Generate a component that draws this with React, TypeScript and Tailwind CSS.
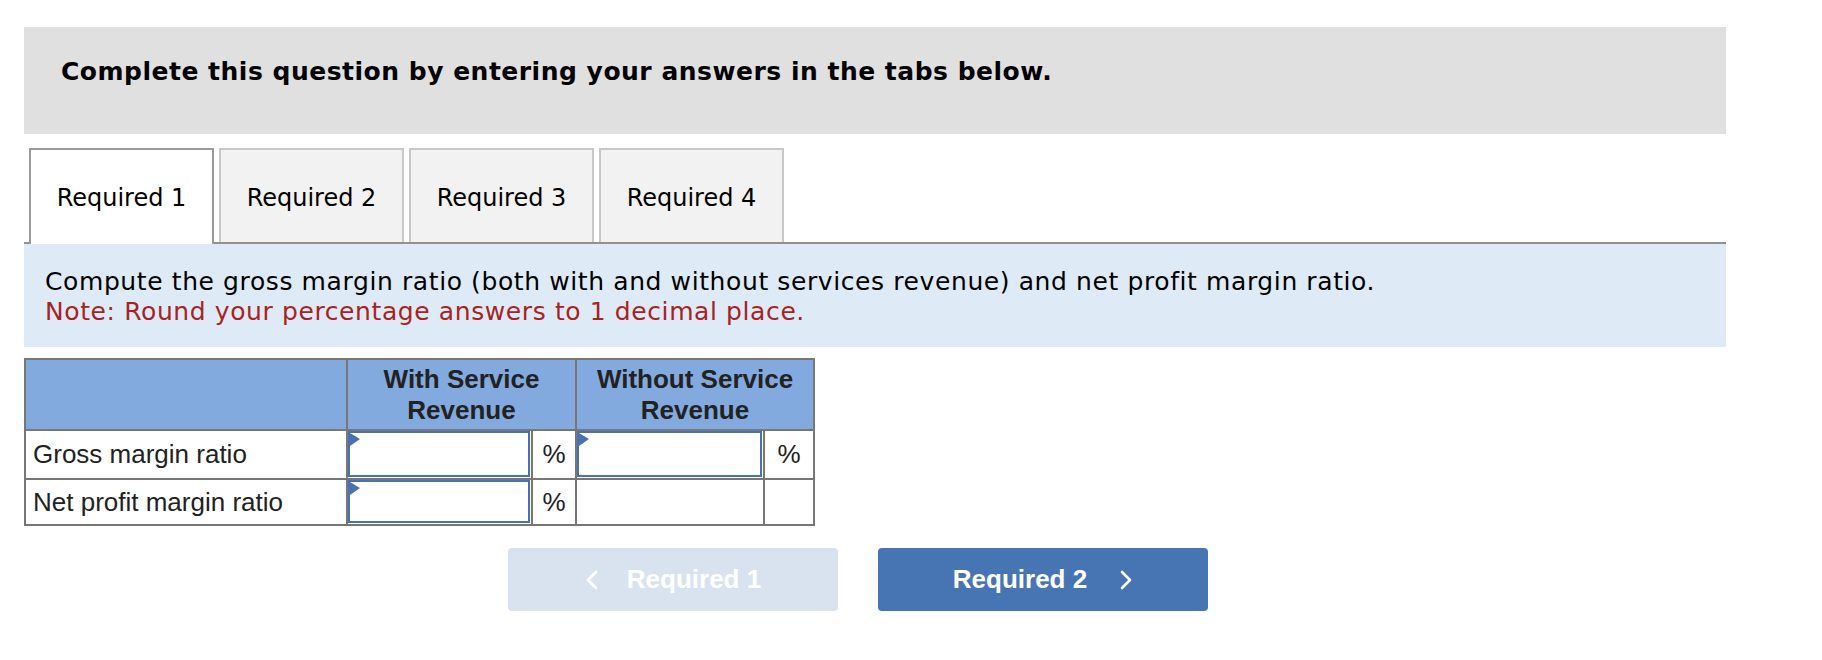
import React from "react";

const verdana = "font-['DejaVu_Sans',Verdana,sans-serif]";
const arial = "font-['Liberation_Sans',Arial,sans-serif]";

function Flag() {
  return (
    <svg className="absolute left-0 top-0" width="10" height="13" viewBox="0 0 10 13">
      <polygon points="0,0 10,6 0,13" fill="#4a72b0" />
    </svg>
  );
}

function InputBox() {
  return (
    <div className="relative h-full w-full border-2 border-[#4a72b0] bg-white">
      <Flag />
    </div>
  );
}

function Chevron({ dir }: { dir: "left" | "right" }) {
  return (
    <svg width="14" height="20" viewBox="0 0 14 20" className="shrink-0">
      <polyline
        points={dir === "left" ? "11,2 3,10 11,18" : "3,2 11,10 3,18"}
        fill="none"
        stroke="#ffffff"
        strokeWidth="2.6"
        strokeLinecap="round"
        strokeLinejoin="round"
      />
    </svg>
  );
}

export default function App() {
  const tabs = ["Required 1", "Required 2", "Required 3", "Required 4"];
  return (
    <div className="w-[1822px] h-[660px] bg-white overflow-hidden">
      <div className="ml-[24px] w-[1702px] pt-[27px]">
        {/* Header */}
        <div className={`h-[107px] bg-[#e0e0e0] pl-[37px] pt-[31px] ${verdana} text-[25px] font-bold leading-[28px] tracking-[0.5px] text-black`}>
          Complete this question by entering your answers in the tabs below.
        </div>

        {/* Tabs */}
        <div className="mt-[14px] flex h-[96px] gap-[5px] border-b-2 border-[#919191] pl-[5px]">
          {tabs.map((t, i) =>
            i === 0 ? (
              <div
                key={t}
                className={`-mb-[2px] flex h-[96px] w-[185px] items-center justify-center border-2 border-b-0 border-[#9a9a9a] bg-white pt-[2px] ${verdana} text-[24px] text-black`}
              >
                {t}
              </div>
            ) : (
              <div
                key={t}
                className={`flex h-[94px] w-[185px] items-center justify-center border-2 border-b-0 border-[#c8c8c8] bg-[#f2f2f2] pt-[4px] ${verdana} text-[24px] text-black`}
              >
                {t}
              </div>
            )
          )}
        </div>

        {/* Instructions */}
        <div className={`bg-[#deebf7] px-[21px] pt-[23px] pb-[20px] ${verdana} text-[25px] leading-[30px] tracking-[0.6px]`}>
          <div className="text-black">
            Compute the gross margin ratio (both with and without services revenue) and net profit margin ratio.
          </div>
          <div className="text-[#a8231f]">Note: Round your percentage answers to 1 decimal place.</div>
        </div>

        {/* Table */}
        <table className={`mt-[11px] border-collapse ${arial} text-[26px] text-[#222]`}>
          <colgroup>
            <col className="w-[322px]" />
            <col className="w-[185px]" />
            <col className="w-[44px]" />
            <col className="w-[188px]" />
            <col className="w-[50px]" />
          </colgroup>
          <thead>
            <tr className="h-[71px] bg-[#82aadf]">
              <th className="border-2 border-[#777]"></th>
              <th colSpan={2} className="border-2 border-[#777] font-bold leading-[31px] text-[#222] align-middle">
                With Service
                <br />
                Revenue
              </th>
              <th colSpan={2} className="border-2 border-[#777] font-bold leading-[31px] text-[#222] align-middle">
                Without Service
                <br />
                Revenue
              </th>
            </tr>
          </thead>
          <tbody>
            <tr className="h-[49px]">
              <td className="border-2 border-[#777] pl-[7px] text-[#222]">Gross margin ratio</td>
              <td className="h-[49px] border-2 border-r-0 border-[#777] p-0 pr-[1px] pb-[1px]">
                <InputBox />
              </td>
              <td className="border-2 border-[#777] text-center">%</td>
              <td className="h-[49px] border-2 border-r-0 border-[#777] p-0 pr-[1px] pb-[1px]">
                <InputBox />
              </td>
              <td className="border-2 border-[#777] text-center">%</td>
            </tr>
            <tr className="h-[46px]">
              <td className="border-2 border-[#777] pl-[7px] text-[#222]">Net profit margin ratio</td>
              <td className="h-[46px] border-2 border-r-0 border-[#777] p-0 pr-[1px] pb-[1px]">
                <InputBox />
              </td>
              <td className="border-2 border-[#777] text-center">%</td>
              <td className="border-2 border-[#777]"></td>
              <td className="border-2 border-[#777]"></td>
            </tr>
          </tbody>
        </table>

        {/* Nav buttons */}
        <div className="mt-[22px] ml-[484px] flex gap-[40px]">
          <div className={`flex h-[63px] w-[330px] items-center justify-center gap-[28px] rounded-[4px] bg-[#d9e3ef] ${arial} text-[26px] font-bold text-white`}>
            <Chevron dir="left" />
            <span>Required 1</span>
          </div>
          <div className={`flex h-[63px] w-[330px] items-center justify-center gap-[32px] rounded-[4px] bg-[#4775b3] ${arial} text-[26px] font-bold text-white`}>
            <span>Required 2</span>
            <Chevron dir="right" />
          </div>
        </div>
      </div>
    </div>
  );
}
